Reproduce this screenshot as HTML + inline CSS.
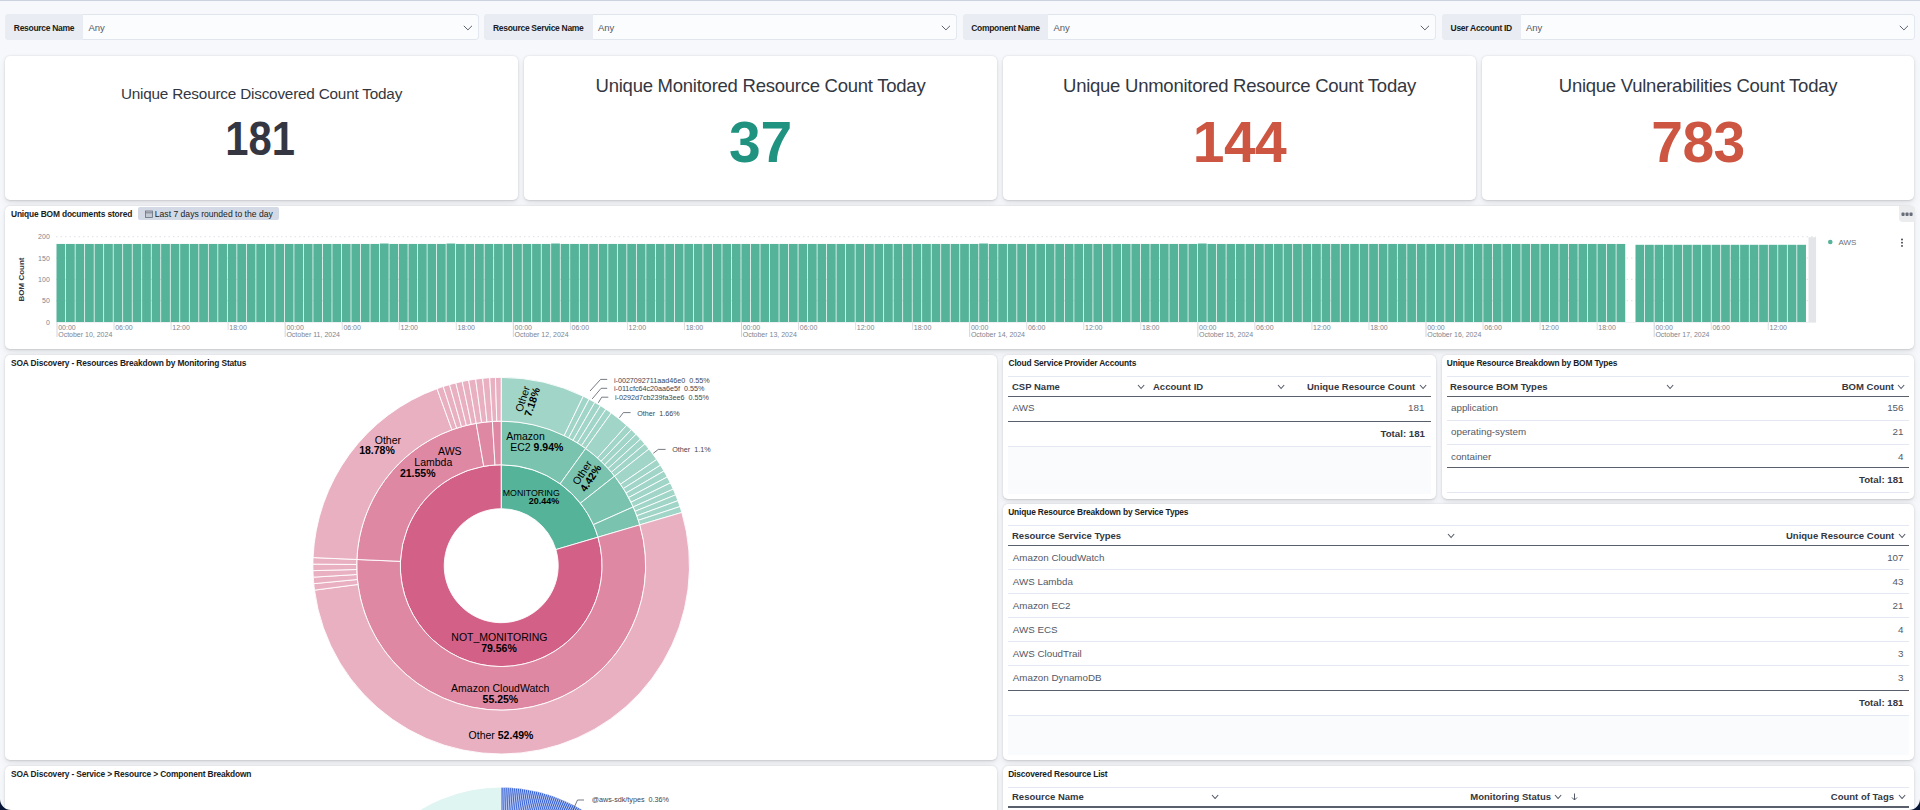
<!DOCTYPE html><html><head><meta charset="utf-8"><style>
*{box-sizing:border-box;margin:0;padding:0}
html,body{width:1920px;height:810px;overflow:hidden;background:#F7F8FC;font-family:"Liberation Sans", sans-serif;}
.topline{position:absolute;left:0;top:0;width:1920px;height:1.2px;background:#CDD3DE}
.filt{position:absolute;top:14px;height:26px;background:#FBFCFD;border-radius:4px;box-shadow:inset 0 0 0 0.9px #E1E6EE}
.flab{position:absolute;left:0;top:0;height:26px;background:#E9EDF3;border-radius:4px 0 0 4px;font-size:8.5px;letter-spacing:-0.3px;font-weight:700;color:#1a1c21;line-height:28.2px;text-align:center;white-space:nowrap}
.fany{position:absolute;top:0;height:26px;line-height:27px;font-size:9.5px;color:#535966}
.chev{position:absolute;top:10.6px}
.panel{position:absolute;background:#fff;border-radius:5px;box-shadow:0 0.7px 1.4px rgba(0,0,0,.08),0 1.9px 4px rgba(0,0,0,.06),0 4.5px 10px rgba(0,0,0,.05),0 0 2.5px rgba(0,0,0,.05)}
.mtitle{position:absolute;left:0;width:100%;text-align:center;color:#343741;white-space:nowrap;line-height:1}
.mnum{position:absolute;left:0;width:100%;text-align:center;font-weight:700;white-space:nowrap;line-height:1}
.ptitle{position:absolute;letter-spacing:-0.15px;font-size:8.4px;font-weight:700;color:#1a1c21;white-space:nowrap;line-height:10px}
.badge{position:absolute;left:132.5px;top:1px;width:141.7px;height:13.3px;background:#D3DAE6;border-radius:2px;font-size:8.6px;color:#1a1c21;line-height:15.8px;padding-left:17.3px;white-space:nowrap}
.dots{position:absolute;left:1893.5px;top:0;width:16px;height:15.5px;background:#EBECEE;border-radius:0 4px 0 4px} .dots svg{position:absolute;left:1px;top:5.5px}
.t{position:absolute;white-space:nowrap;line-height:1}
</style></head><body>
<div class="topline"></div>
<div class="filt" style="left:5px;width:473.5px">
<div class="flab" style="width:78px">Resource Name</div>
<div class="fany" style="left:83.5px">Any</div>
<svg class="chev" width="10" height="6" viewBox="0 0 10 6" style="left:457.5px"><path d="M0.8 0.8 L4.9 4.9 L9 0.8" fill="none" stroke="#535966" stroke-width="0.95"/></svg>
</div>
<div class="filt" style="left:484px;width:473px">
<div class="flab" style="width:108.5px">Resource Service Name</div>
<div class="fany" style="left:114.0px">Any</div>
<svg class="chev" width="10" height="6" viewBox="0 0 10 6" style="left:457px"><path d="M0.8 0.8 L4.9 4.9 L9 0.8" fill="none" stroke="#535966" stroke-width="0.95"/></svg>
</div>
<div class="filt" style="left:963px;width:473px">
<div class="flab" style="width:85px">Component Name</div>
<div class="fany" style="left:90.5px">Any</div>
<svg class="chev" width="10" height="6" viewBox="0 0 10 6" style="left:457px"><path d="M0.8 0.8 L4.9 4.9 L9 0.8" fill="none" stroke="#535966" stroke-width="0.95"/></svg>
</div>
<div class="filt" style="left:1442px;width:472.5px">
<div class="flab" style="width:78.5px">User Account ID</div>
<div class="fany" style="left:84.0px">Any</div>
<svg class="chev" width="10" height="6" viewBox="0 0 10 6" style="left:456.5px"><path d="M0.8 0.8 L4.9 4.9 L9 0.8" fill="none" stroke="#535966" stroke-width="0.95"/></svg>
</div>
<div class="panel" style="left:5px;top:56px;width:513px;height:144px">
<div class="mtitle" style="top:30px;font-size:15.3px;letter-spacing:-0.2px">Unique Resource Discovered Count Today</div>
<div class="mnum" style="top:58.5px;font-size:48px;letter-spacing:0px;color:#343741"><span style="display:inline-block;transform:scaleX(0.87);margin-left:-3px">181</span></div>
</div>
<div class="panel" style="left:524px;top:56px;width:473px;height:144px">
<div class="mtitle" style="top:21px;font-size:18.5px;letter-spacing:-0.25px">Unique Monitored Resource Count Today</div>
<div class="mnum" style="top:57.5px;font-size:57px;letter-spacing:-0.3px;color:#209280"><span style="display:inline-block;transform:scaleX(1);">37</span></div>
</div>
<div class="panel" style="left:1003px;top:56px;width:473px;height:144px">
<div class="mtitle" style="top:21px;font-size:18.5px;letter-spacing:-0.25px">Unique Unmonitored Resource Count Today</div>
<div class="mnum" style="top:57.5px;font-size:57px;letter-spacing:-0.5px;color:#CC5642"><span style="display:inline-block;transform:scaleX(1);">144</span></div>
</div>
<div class="panel" style="left:1482px;top:56px;width:432px;height:144px">
<div class="mtitle" style="top:21px;font-size:18.5px;letter-spacing:-0.25px">Unique Vulnerabilities Count Today</div>
<div class="mnum" style="top:57.5px;font-size:57px;letter-spacing:-0.5px;color:#CC5642"><span style="display:inline-block;transform:scaleX(1);">783</span></div>
</div>
<div class="panel" style="left:5px;top:206px;width:1909px;height:143px">
<div class="ptitle" style="left:6px;top:3px">Unique BOM documents stored</div>
<div class="badge"><svg width="8" height="8" viewBox="0 0 8 8" style="position:absolute;left:7px;top:3px"><rect x="0.5" y="1" width="7" height="6.5" fill="#C3C9D3" stroke="#69707D" stroke-width="0.8"/><line x1="0.5" y1="2.8" x2="7.5" y2="2.8" stroke="#69707D" stroke-width="0.8"/></svg>Last 7 days rounded to the day</div>
<div class="dots"><svg width="14" height="6" viewBox="0 0 14 6"><rect x="1.5" y="0.6" width="3.1" height="3.4" rx="0.9" fill="#686E79"/><rect x="5.5" y="0.6" width="3.1" height="3.4" rx="0.9" fill="#686E79"/><rect x="9.5" y="0.6" width="3.1" height="3.4" rx="0.9" fill="#686E79"/></svg></div>
<svg width="1909" height="142" style="position:absolute;left:0;top:0"><line x1="51" x2="1811" y1="30.7" y2="30.7" stroke="#DCDFE4" stroke-width="0.9" stroke-dasharray="1.5 3"/><line x1="51" x2="1811" y1="52.0" y2="52.0" stroke="#DCDFE4" stroke-width="0.9" stroke-dasharray="1.5 3"/><line x1="51" x2="1811" y1="73.4" y2="73.4" stroke="#DCDFE4" stroke-width="0.9" stroke-dasharray="1.5 3"/><line x1="51" x2="1811" y1="94.7" y2="94.7" stroke="#DCDFE4" stroke-width="0.9" stroke-dasharray="1.5 3"/><rect x="51.50" y="37.95" width="8.76" height="78.05" fill="#54B399"/><rect x="61.01" y="37.95" width="8.76" height="78.05" fill="#54B399"/><rect x="70.52" y="37.95" width="8.76" height="78.05" fill="#54B399"/><rect x="80.04" y="37.95" width="8.76" height="78.05" fill="#54B399"/><rect x="89.55" y="37.95" width="8.76" height="78.05" fill="#54B399"/><rect x="99.06" y="37.95" width="8.76" height="78.05" fill="#54B399"/><rect x="108.57" y="37.95" width="8.76" height="78.05" fill="#54B399"/><rect x="118.08" y="37.95" width="8.76" height="78.05" fill="#54B399"/><rect x="127.60" y="37.95" width="8.76" height="78.05" fill="#54B399"/><rect x="137.11" y="37.95" width="8.76" height="78.05" fill="#54B399"/><rect x="146.62" y="37.95" width="8.76" height="78.05" fill="#54B399"/><rect x="156.13" y="37.95" width="8.76" height="78.05" fill="#54B399"/><rect x="165.64" y="37.95" width="8.76" height="78.05" fill="#54B399"/><rect x="175.16" y="37.95" width="8.76" height="78.05" fill="#54B399"/><rect x="184.67" y="37.95" width="8.76" height="78.05" fill="#54B399"/><rect x="194.18" y="37.95" width="8.76" height="78.05" fill="#54B399"/><rect x="203.69" y="37.95" width="8.76" height="78.05" fill="#54B399"/><rect x="213.20" y="37.95" width="8.76" height="78.05" fill="#54B399"/><rect x="222.72" y="37.95" width="8.76" height="78.05" fill="#54B399"/><rect x="232.23" y="37.95" width="8.76" height="78.05" fill="#54B399"/><rect x="241.74" y="37.95" width="8.76" height="78.05" fill="#54B399"/><rect x="251.25" y="37.95" width="8.76" height="78.05" fill="#54B399"/><rect x="260.76" y="37.95" width="8.76" height="78.05" fill="#54B399"/><rect x="270.28" y="37.95" width="8.76" height="78.05" fill="#54B399"/><rect x="279.79" y="37.95" width="8.76" height="78.05" fill="#54B399"/><rect x="289.30" y="37.95" width="8.76" height="78.05" fill="#54B399"/><rect x="298.81" y="37.95" width="8.76" height="78.05" fill="#54B399"/><rect x="308.32" y="37.95" width="8.76" height="78.05" fill="#54B399"/><rect x="317.84" y="37.95" width="8.76" height="78.05" fill="#54B399"/><rect x="327.35" y="37.95" width="8.76" height="78.05" fill="#54B399"/><rect x="336.86" y="37.95" width="8.76" height="78.05" fill="#54B399"/><rect x="346.37" y="37.95" width="8.76" height="78.05" fill="#54B399"/><rect x="355.88" y="37.95" width="8.76" height="78.05" fill="#54B399"/><rect x="365.40" y="37.95" width="8.76" height="78.05" fill="#54B399"/><rect x="374.91" y="37.52" width="8.76" height="78.48" fill="#54B399"/><rect x="384.42" y="37.95" width="8.76" height="78.05" fill="#54B399"/><rect x="393.93" y="37.95" width="8.76" height="78.05" fill="#54B399"/><rect x="403.44" y="37.95" width="8.76" height="78.05" fill="#54B399"/><rect x="412.96" y="37.95" width="8.76" height="78.05" fill="#54B399"/><rect x="422.47" y="37.95" width="8.76" height="78.05" fill="#54B399"/><rect x="431.98" y="37.95" width="8.76" height="78.05" fill="#54B399"/><rect x="441.49" y="37.52" width="8.76" height="78.48" fill="#54B399"/><rect x="451.00" y="37.95" width="8.76" height="78.05" fill="#54B399"/><rect x="460.52" y="37.95" width="8.76" height="78.05" fill="#54B399"/><rect x="470.03" y="37.95" width="8.76" height="78.05" fill="#54B399"/><rect x="479.54" y="37.95" width="8.76" height="78.05" fill="#54B399"/><rect x="489.05" y="37.95" width="8.76" height="78.05" fill="#54B399"/><rect x="498.56" y="37.95" width="8.76" height="78.05" fill="#54B399"/><rect x="508.08" y="37.95" width="8.76" height="78.05" fill="#54B399"/><rect x="517.59" y="37.95" width="8.76" height="78.05" fill="#54B399"/><rect x="527.10" y="37.95" width="8.76" height="78.05" fill="#54B399"/><rect x="536.61" y="37.95" width="8.76" height="78.05" fill="#54B399"/><rect x="546.12" y="37.52" width="8.76" height="78.48" fill="#54B399"/><rect x="555.64" y="37.95" width="8.76" height="78.05" fill="#54B399"/><rect x="565.15" y="37.95" width="8.76" height="78.05" fill="#54B399"/><rect x="574.66" y="37.95" width="8.76" height="78.05" fill="#54B399"/><rect x="584.17" y="37.95" width="8.76" height="78.05" fill="#54B399"/><rect x="593.68" y="37.95" width="8.76" height="78.05" fill="#54B399"/><rect x="603.20" y="37.95" width="8.76" height="78.05" fill="#54B399"/><rect x="612.71" y="37.95" width="8.76" height="78.05" fill="#54B399"/><rect x="622.22" y="37.95" width="8.76" height="78.05" fill="#54B399"/><rect x="631.73" y="37.95" width="8.76" height="78.05" fill="#54B399"/><rect x="641.24" y="37.95" width="8.76" height="78.05" fill="#54B399"/><rect x="650.76" y="37.95" width="8.76" height="78.05" fill="#54B399"/><rect x="660.27" y="37.95" width="8.76" height="78.05" fill="#54B399"/><rect x="669.78" y="37.95" width="8.76" height="78.05" fill="#54B399"/><rect x="679.29" y="37.95" width="8.76" height="78.05" fill="#54B399"/><rect x="688.80" y="37.95" width="8.76" height="78.05" fill="#54B399"/><rect x="698.32" y="37.95" width="8.76" height="78.05" fill="#54B399"/><rect x="707.83" y="37.95" width="8.76" height="78.05" fill="#54B399"/><rect x="717.34" y="37.95" width="8.76" height="78.05" fill="#54B399"/><rect x="726.85" y="37.95" width="8.76" height="78.05" fill="#54B399"/><rect x="736.36" y="37.95" width="8.76" height="78.05" fill="#54B399"/><rect x="745.88" y="37.95" width="8.76" height="78.05" fill="#54B399"/><rect x="755.39" y="37.95" width="8.76" height="78.05" fill="#54B399"/><rect x="764.90" y="37.95" width="8.76" height="78.05" fill="#54B399"/><rect x="774.41" y="37.95" width="8.76" height="78.05" fill="#54B399"/><rect x="783.92" y="37.95" width="8.76" height="78.05" fill="#54B399"/><rect x="793.44" y="37.95" width="8.76" height="78.05" fill="#54B399"/><rect x="802.95" y="37.95" width="8.76" height="78.05" fill="#54B399"/><rect x="812.46" y="37.95" width="8.76" height="78.05" fill="#54B399"/><rect x="821.97" y="37.95" width="8.76" height="78.05" fill="#54B399"/><rect x="831.48" y="37.95" width="8.76" height="78.05" fill="#54B399"/><rect x="841.00" y="37.95" width="8.76" height="78.05" fill="#54B399"/><rect x="850.51" y="37.95" width="8.76" height="78.05" fill="#54B399"/><rect x="860.02" y="37.95" width="8.76" height="78.05" fill="#54B399"/><rect x="869.53" y="37.95" width="8.76" height="78.05" fill="#54B399"/><rect x="879.04" y="37.95" width="8.76" height="78.05" fill="#54B399"/><rect x="888.56" y="37.95" width="8.76" height="78.05" fill="#54B399"/><rect x="898.07" y="37.95" width="8.76" height="78.05" fill="#54B399"/><rect x="907.58" y="37.95" width="8.76" height="78.05" fill="#54B399"/><rect x="917.09" y="37.95" width="8.76" height="78.05" fill="#54B399"/><rect x="926.60" y="37.95" width="8.76" height="78.05" fill="#54B399"/><rect x="936.12" y="37.95" width="8.76" height="78.05" fill="#54B399"/><rect x="945.63" y="37.95" width="8.76" height="78.05" fill="#54B399"/><rect x="955.14" y="37.95" width="8.76" height="78.05" fill="#54B399"/><rect x="964.65" y="37.95" width="8.76" height="78.05" fill="#54B399"/><rect x="974.16" y="37.52" width="8.76" height="78.48" fill="#54B399"/><rect x="983.68" y="37.95" width="8.76" height="78.05" fill="#54B399"/><rect x="993.19" y="37.95" width="8.76" height="78.05" fill="#54B399"/><rect x="1002.70" y="37.95" width="8.76" height="78.05" fill="#54B399"/><rect x="1012.21" y="37.95" width="8.76" height="78.05" fill="#54B399"/><rect x="1021.72" y="37.95" width="8.76" height="78.05" fill="#54B399"/><rect x="1031.24" y="37.95" width="8.76" height="78.05" fill="#54B399"/><rect x="1040.75" y="37.95" width="8.76" height="78.05" fill="#54B399"/><rect x="1050.26" y="37.95" width="8.76" height="78.05" fill="#54B399"/><rect x="1059.77" y="37.95" width="8.76" height="78.05" fill="#54B399"/><rect x="1069.28" y="37.95" width="8.76" height="78.05" fill="#54B399"/><rect x="1078.80" y="37.95" width="8.76" height="78.05" fill="#54B399"/><rect x="1088.31" y="37.95" width="8.76" height="78.05" fill="#54B399"/><rect x="1097.82" y="37.95" width="8.76" height="78.05" fill="#54B399"/><rect x="1107.33" y="37.95" width="8.76" height="78.05" fill="#54B399"/><rect x="1116.84" y="37.95" width="8.76" height="78.05" fill="#54B399"/><rect x="1126.36" y="37.95" width="8.76" height="78.05" fill="#54B399"/><rect x="1135.87" y="37.95" width="8.76" height="78.05" fill="#54B399"/><rect x="1145.38" y="37.95" width="8.76" height="78.05" fill="#54B399"/><rect x="1154.89" y="37.95" width="8.76" height="78.05" fill="#54B399"/><rect x="1164.40" y="37.95" width="8.76" height="78.05" fill="#54B399"/><rect x="1173.92" y="37.95" width="8.76" height="78.05" fill="#54B399"/><rect x="1183.43" y="37.95" width="8.76" height="78.05" fill="#54B399"/><rect x="1192.94" y="37.52" width="8.76" height="78.48" fill="#54B399"/><rect x="1202.45" y="37.95" width="8.76" height="78.05" fill="#54B399"/><rect x="1211.96" y="37.95" width="8.76" height="78.05" fill="#54B399"/><rect x="1221.48" y="37.95" width="8.76" height="78.05" fill="#54B399"/><rect x="1230.99" y="37.95" width="8.76" height="78.05" fill="#54B399"/><rect x="1240.50" y="37.95" width="8.76" height="78.05" fill="#54B399"/><rect x="1250.01" y="37.95" width="8.76" height="78.05" fill="#54B399"/><rect x="1259.52" y="37.95" width="8.76" height="78.05" fill="#54B399"/><rect x="1269.04" y="37.95" width="8.76" height="78.05" fill="#54B399"/><rect x="1278.55" y="37.95" width="8.76" height="78.05" fill="#54B399"/><rect x="1288.06" y="37.95" width="8.76" height="78.05" fill="#54B399"/><rect x="1297.57" y="37.95" width="8.76" height="78.05" fill="#54B399"/><rect x="1307.08" y="37.95" width="8.76" height="78.05" fill="#54B399"/><rect x="1316.60" y="37.95" width="8.76" height="78.05" fill="#54B399"/><rect x="1326.11" y="37.95" width="8.76" height="78.05" fill="#54B399"/><rect x="1335.62" y="37.95" width="8.76" height="78.05" fill="#54B399"/><rect x="1345.13" y="37.95" width="8.76" height="78.05" fill="#54B399"/><rect x="1354.64" y="37.95" width="8.76" height="78.05" fill="#54B399"/><rect x="1364.16" y="37.95" width="8.76" height="78.05" fill="#54B399"/><rect x="1373.67" y="37.95" width="8.76" height="78.05" fill="#54B399"/><rect x="1383.18" y="37.95" width="8.76" height="78.05" fill="#54B399"/><rect x="1392.69" y="37.95" width="8.76" height="78.05" fill="#54B399"/><rect x="1402.20" y="37.95" width="8.76" height="78.05" fill="#54B399"/><rect x="1411.72" y="37.95" width="8.76" height="78.05" fill="#54B399"/><rect x="1421.23" y="37.95" width="8.76" height="78.05" fill="#54B399"/><rect x="1430.74" y="37.95" width="8.76" height="78.05" fill="#54B399"/><rect x="1440.25" y="37.95" width="8.76" height="78.05" fill="#54B399"/><rect x="1449.76" y="37.95" width="8.76" height="78.05" fill="#54B399"/><rect x="1459.28" y="37.95" width="8.76" height="78.05" fill="#54B399"/><rect x="1468.79" y="37.95" width="8.76" height="78.05" fill="#54B399"/><rect x="1478.30" y="37.95" width="8.76" height="78.05" fill="#54B399"/><rect x="1487.81" y="37.95" width="8.76" height="78.05" fill="#54B399"/><rect x="1497.32" y="37.95" width="8.76" height="78.05" fill="#54B399"/><rect x="1506.84" y="37.95" width="8.76" height="78.05" fill="#54B399"/><rect x="1516.35" y="37.95" width="8.76" height="78.05" fill="#54B399"/><rect x="1525.86" y="37.95" width="8.76" height="78.05" fill="#54B399"/><rect x="1535.37" y="37.95" width="8.76" height="78.05" fill="#54B399"/><rect x="1544.88" y="37.95" width="8.76" height="78.05" fill="#54B399"/><rect x="1554.40" y="37.95" width="8.76" height="78.05" fill="#54B399"/><rect x="1563.91" y="37.95" width="8.76" height="78.05" fill="#54B399"/><rect x="1573.42" y="37.95" width="8.76" height="78.05" fill="#54B399"/><rect x="1582.93" y="37.95" width="8.76" height="78.05" fill="#54B399"/><rect x="1592.44" y="37.95" width="8.76" height="78.05" fill="#54B399"/><rect x="1601.96" y="37.95" width="8.76" height="78.05" fill="#54B399"/><rect x="1611.47" y="37.95" width="8.76" height="78.05" fill="#54B399"/><rect x="1630.49" y="38.80" width="8.76" height="77.20" fill="#54B399"/><rect x="1640.00" y="38.80" width="8.76" height="77.20" fill="#54B399"/><rect x="1649.52" y="38.80" width="8.76" height="77.20" fill="#54B399"/><rect x="1659.03" y="38.80" width="8.76" height="77.20" fill="#54B399"/><rect x="1668.54" y="38.80" width="8.76" height="77.20" fill="#54B399"/><rect x="1678.05" y="38.80" width="8.76" height="77.20" fill="#54B399"/><rect x="1687.56" y="38.80" width="8.76" height="77.20" fill="#54B399"/><rect x="1697.08" y="38.80" width="8.76" height="77.20" fill="#54B399"/><rect x="1706.59" y="38.80" width="8.76" height="77.20" fill="#54B399"/><rect x="1716.10" y="38.80" width="8.76" height="77.20" fill="#54B399"/><rect x="1725.61" y="38.80" width="8.76" height="77.20" fill="#54B399"/><rect x="1735.12" y="38.80" width="8.76" height="77.20" fill="#54B399"/><rect x="1744.64" y="38.80" width="8.76" height="77.20" fill="#54B399"/><rect x="1754.15" y="38.80" width="8.76" height="77.20" fill="#54B399"/><rect x="1763.66" y="38.80" width="8.76" height="77.20" fill="#54B399"/><rect x="1773.17" y="38.80" width="8.76" height="77.20" fill="#54B399"/><rect x="1782.68" y="38.80" width="8.76" height="77.20" fill="#54B399"/><rect x="1792.20" y="38.80" width="8.76" height="77.20" fill="#54B399"/><rect x="1803.5" y="31.19999999999999" width="7.6" height="84.8" fill="#E4E5E8"/><line x1="51" x2="1811" y1="116.5" y2="116.5" stroke="#EEF0F3" stroke-width="1"/><text x="44.8" y="33.3" text-anchor="end" font-size="7" fill="#7E8591" font-family='"Liberation Sans"'>200</text><text x="44.8" y="54.6" text-anchor="end" font-size="7" fill="#7E8591" font-family='"Liberation Sans"'>150</text><text x="44.8" y="76.0" text-anchor="end" font-size="7" fill="#7E8591" font-family='"Liberation Sans"'>100</text><text x="44.8" y="97.3" text-anchor="end" font-size="7" fill="#7E8591" font-family='"Liberation Sans"'>50</text><text x="44.8" y="118.6" text-anchor="end" font-size="7" fill="#7E8591" font-family='"Liberation Sans"'>0</text><text transform="translate(18.5,73.5) rotate(-90)" text-anchor="middle" font-size="8" font-weight="700" fill="#343741" font-family='"Liberation Sans"'>BOM Count</text><line x1="52.0" x2="52.0" y1="116.5" y2="131" stroke="#C5C9D0" stroke-width="0.8"/><text x="53.2" y="124.3" font-size="7" fill="#7E8591" font-family='"Liberation Sans"'>00:00</text><text x="53.2" y="130.6" font-size="7" fill="#7E8591" font-family='"Liberation Sans"'>October 10, 2024</text><line x1="109.04249999999999" x2="109.04249999999999" y1="116.5" y2="124" stroke="#D3D6DB" stroke-width="0.8"/><text x="110.2" y="124.3" font-size="7" fill="#7E8591" font-family='"Liberation Sans"'>06:00</text><line x1="166.08499999999998" x2="166.08499999999998" y1="116.5" y2="124" stroke="#D3D6DB" stroke-width="0.8"/><text x="167.3" y="124.3" font-size="7" fill="#7E8591" font-family='"Liberation Sans"'>12:00</text><line x1="223.1275" x2="223.1275" y1="116.5" y2="124" stroke="#D3D6DB" stroke-width="0.8"/><text x="224.3" y="124.3" font-size="7" fill="#7E8591" font-family='"Liberation Sans"'>18:00</text><line x1="280.16999999999996" x2="280.16999999999996" y1="116.5" y2="131" stroke="#C5C9D0" stroke-width="0.8"/><text x="281.4" y="124.3" font-size="7" fill="#7E8591" font-family='"Liberation Sans"'>00:00</text><text x="281.4" y="130.6" font-size="7" fill="#7E8591" font-family='"Liberation Sans"'>October 11, 2024</text><line x1="337.2125" x2="337.2125" y1="116.5" y2="124" stroke="#D3D6DB" stroke-width="0.8"/><text x="338.4" y="124.3" font-size="7" fill="#7E8591" font-family='"Liberation Sans"'>06:00</text><line x1="394.25499999999994" x2="394.25499999999994" y1="116.5" y2="124" stroke="#D3D6DB" stroke-width="0.8"/><text x="395.5" y="124.3" font-size="7" fill="#7E8591" font-family='"Liberation Sans"'>12:00</text><line x1="451.29749999999996" x2="451.29749999999996" y1="116.5" y2="124" stroke="#D3D6DB" stroke-width="0.8"/><text x="452.5" y="124.3" font-size="7" fill="#7E8591" font-family='"Liberation Sans"'>18:00</text><line x1="508.3399999999999" x2="508.3399999999999" y1="116.5" y2="131" stroke="#C5C9D0" stroke-width="0.8"/><text x="509.5" y="124.3" font-size="7" fill="#7E8591" font-family='"Liberation Sans"'>00:00</text><text x="509.5" y="130.6" font-size="7" fill="#7E8591" font-family='"Liberation Sans"'>October 12, 2024</text><line x1="565.3824999999999" x2="565.3824999999999" y1="116.5" y2="124" stroke="#D3D6DB" stroke-width="0.8"/><text x="566.6" y="124.3" font-size="7" fill="#7E8591" font-family='"Liberation Sans"'>06:00</text><line x1="622.425" x2="622.425" y1="116.5" y2="124" stroke="#D3D6DB" stroke-width="0.8"/><text x="623.6" y="124.3" font-size="7" fill="#7E8591" font-family='"Liberation Sans"'>12:00</text><line x1="679.4675" x2="679.4675" y1="116.5" y2="124" stroke="#D3D6DB" stroke-width="0.8"/><text x="680.7" y="124.3" font-size="7" fill="#7E8591" font-family='"Liberation Sans"'>18:00</text><line x1="736.51" x2="736.51" y1="116.5" y2="131" stroke="#C5C9D0" stroke-width="0.8"/><text x="737.7" y="124.3" font-size="7" fill="#7E8591" font-family='"Liberation Sans"'>00:00</text><text x="737.7" y="130.6" font-size="7" fill="#7E8591" font-family='"Liberation Sans"'>October 13, 2024</text><line x1="793.5525" x2="793.5525" y1="116.5" y2="124" stroke="#D3D6DB" stroke-width="0.8"/><text x="794.8" y="124.3" font-size="7" fill="#7E8591" font-family='"Liberation Sans"'>06:00</text><line x1="850.595" x2="850.595" y1="116.5" y2="124" stroke="#D3D6DB" stroke-width="0.8"/><text x="851.8" y="124.3" font-size="7" fill="#7E8591" font-family='"Liberation Sans"'>12:00</text><line x1="907.6375" x2="907.6375" y1="116.5" y2="124" stroke="#D3D6DB" stroke-width="0.8"/><text x="908.8" y="124.3" font-size="7" fill="#7E8591" font-family='"Liberation Sans"'>18:00</text><line x1="964.68" x2="964.68" y1="116.5" y2="131" stroke="#C5C9D0" stroke-width="0.8"/><text x="965.9" y="124.3" font-size="7" fill="#7E8591" font-family='"Liberation Sans"'>00:00</text><text x="965.9" y="130.6" font-size="7" fill="#7E8591" font-family='"Liberation Sans"'>October 14, 2024</text><line x1="1021.7224999999999" x2="1021.7224999999999" y1="116.5" y2="124" stroke="#D3D6DB" stroke-width="0.8"/><text x="1022.9" y="124.3" font-size="7" fill="#7E8591" font-family='"Liberation Sans"'>06:00</text><line x1="1078.7649999999999" x2="1078.7649999999999" y1="116.5" y2="124" stroke="#D3D6DB" stroke-width="0.8"/><text x="1080.0" y="124.3" font-size="7" fill="#7E8591" font-family='"Liberation Sans"'>12:00</text><line x1="1135.8075" x2="1135.8075" y1="116.5" y2="124" stroke="#D3D6DB" stroke-width="0.8"/><text x="1137.0" y="124.3" font-size="7" fill="#7E8591" font-family='"Liberation Sans"'>18:00</text><line x1="1192.85" x2="1192.85" y1="116.5" y2="131" stroke="#C5C9D0" stroke-width="0.8"/><text x="1194.0" y="124.3" font-size="7" fill="#7E8591" font-family='"Liberation Sans"'>00:00</text><text x="1194.0" y="130.6" font-size="7" fill="#7E8591" font-family='"Liberation Sans"'>October 15, 2024</text><line x1="1249.8925" x2="1249.8925" y1="116.5" y2="124" stroke="#D3D6DB" stroke-width="0.8"/><text x="1251.1" y="124.3" font-size="7" fill="#7E8591" font-family='"Liberation Sans"'>06:00</text><line x1="1306.935" x2="1306.935" y1="116.5" y2="124" stroke="#D3D6DB" stroke-width="0.8"/><text x="1308.1" y="124.3" font-size="7" fill="#7E8591" font-family='"Liberation Sans"'>12:00</text><line x1="1363.9775" x2="1363.9775" y1="116.5" y2="124" stroke="#D3D6DB" stroke-width="0.8"/><text x="1365.2" y="124.3" font-size="7" fill="#7E8591" font-family='"Liberation Sans"'>18:00</text><line x1="1421.02" x2="1421.02" y1="116.5" y2="131" stroke="#C5C9D0" stroke-width="0.8"/><text x="1422.2" y="124.3" font-size="7" fill="#7E8591" font-family='"Liberation Sans"'>00:00</text><text x="1422.2" y="130.6" font-size="7" fill="#7E8591" font-family='"Liberation Sans"'>October 16, 2024</text><line x1="1478.0625" x2="1478.0625" y1="116.5" y2="124" stroke="#D3D6DB" stroke-width="0.8"/><text x="1479.3" y="124.3" font-size="7" fill="#7E8591" font-family='"Liberation Sans"'>06:00</text><line x1="1535.105" x2="1535.105" y1="116.5" y2="124" stroke="#D3D6DB" stroke-width="0.8"/><text x="1536.3" y="124.3" font-size="7" fill="#7E8591" font-family='"Liberation Sans"'>12:00</text><line x1="1592.1475" x2="1592.1475" y1="116.5" y2="124" stroke="#D3D6DB" stroke-width="0.8"/><text x="1593.3" y="124.3" font-size="7" fill="#7E8591" font-family='"Liberation Sans"'>18:00</text><line x1="1649.1899999999998" x2="1649.1899999999998" y1="116.5" y2="131" stroke="#C5C9D0" stroke-width="0.8"/><text x="1650.4" y="124.3" font-size="7" fill="#7E8591" font-family='"Liberation Sans"'>00:00</text><text x="1650.4" y="130.6" font-size="7" fill="#7E8591" font-family='"Liberation Sans"'>October 17, 2024</text><line x1="1706.2324999999998" x2="1706.2324999999998" y1="116.5" y2="124" stroke="#D3D6DB" stroke-width="0.8"/><text x="1707.4" y="124.3" font-size="7" fill="#7E8591" font-family='"Liberation Sans"'>06:00</text><line x1="1763.2749999999999" x2="1763.2749999999999" y1="116.5" y2="124" stroke="#D3D6DB" stroke-width="0.8"/><text x="1764.5" y="124.3" font-size="7" fill="#7E8591" font-family='"Liberation Sans"'>12:00</text><circle cx="1825.3" cy="36" r="2.3" fill="#54B399"/><text x="1833.5" y="38.80000000000001" font-size="8" fill="#69707D" font-family='"Liberation Sans"'>AWS</text><circle cx="1897" cy="33.5" r="0.9" fill="#343741"/><circle cx="1897" cy="36.7" r="0.9" fill="#343741"/><circle cx="1897" cy="39.9" r="0.9" fill="#343741"/></svg>
</div>
<div class="panel" style="left:5px;top:355px;width:992px;height:405px"></div>
<div class="panel" style="left:1003px;top:355px;width:432.5px;height:144px"></div>
<div class="panel" style="left:1441.5px;top:355px;width:472.5px;height:144px"></div>
<div class="panel" style="left:1003px;top:504.3px;width:911px;height:255.7px"></div>
<div class="panel" style="left:5px;top:766px;width:992px;height:100px"></div>
<div class="panel" style="left:1003px;top:766px;width:911px;height:100px"></div>
<div class="t" style="left:11px;top:359.30px;font-size:8.4px;font-weight:700;color:#1a1c21;letter-spacing:-0.15px">SOA Discovery - Resources Breakdown by Monitoring Status</div>
<div class="t" style="left:1008.5px;top:359.30px;font-size:8.4px;font-weight:700;color:#1a1c21;letter-spacing:-0.15px">Cloud Service Provider Accounts</div>
<div class="t" style="left:1446.8px;top:359.30px;font-size:8.4px;font-weight:700;color:#1a1c21;letter-spacing:-0.15px">Unique Resource Breakdown by BOM Types</div>
<div class="t" style="left:1008.2px;top:507.80px;font-size:8.4px;font-weight:700;color:#1a1c21;letter-spacing:-0.15px">Unique Resource Breakdown by Service Types</div>
<div class="t" style="left:11px;top:769.80px;font-size:8.4px;font-weight:700;color:#1a1c21;letter-spacing:-0.15px">SOA Discovery - Service &gt; Resource &gt; Component Breakdown</div>
<div class="t" style="left:1008.2px;top:769.80px;font-size:8.4px;font-weight:700;color:#1a1c21;letter-spacing:-0.15px">Discovered Resource List</div>
<div style="position:absolute;left:1008px;top:375.90px;width:423px;height:1px;background:#E3E8F2"></div>
<div class="t" style="left:1012px;top:381.90px;font-size:9.5px;font-weight:700;color:#343741;letter-spacing:0px">CSP Name</div>
<svg style="position:absolute;left:1136.7px;top:384.2px" width="8.2" height="5.5" viewBox="0 0 8.2 5.5"><path d="M1 1 L4.1 4.5 L7.2 1" fill="none" stroke="#535966" stroke-width="1.1"/></svg>
<div class="t" style="left:1153px;top:381.90px;font-size:9.5px;font-weight:700;color:#343741;letter-spacing:0px">Account ID</div>
<svg style="position:absolute;left:1277.2px;top:384.2px" width="8.2" height="5.5" viewBox="0 0 8.2 5.5"><path d="M1 1 L4.1 4.5 L7.2 1" fill="none" stroke="#535966" stroke-width="1.1"/></svg>
<div class="t" style="right:504.79999999999995px;top:381.90px;font-size:9.5px;font-weight:700;color:#343741;letter-spacing:0px">Unique Resource Count</div>
<svg style="position:absolute;left:1418.5px;top:384.2px" width="8.2" height="5.5" viewBox="0 0 8.2 5.5"><path d="M1 1 L4.1 4.5 L7.2 1" fill="none" stroke="#535966" stroke-width="1.1"/></svg>
<div style="position:absolute;left:1008px;top:395.90px;width:423px;height:1.2px;background:#5A606B"></div>
<div class="t" style="left:1012.5px;top:403.43px;font-size:9.8px;font-weight:400;color:#535966;letter-spacing:0px">AWS</div>
<div class="t" style="right:495.5999999999999px;top:403.43px;font-size:9.8px;font-weight:400;color:#535966;letter-spacing:0px">181</div>
<div style="position:absolute;left:1008px;top:420.90px;width:423px;height:1.2px;background:#5A606B"></div>
<div class="t" style="right:495px;top:428.72px;font-size:9.7px;font-weight:700;color:#343741;letter-spacing:0px">Total: 181</div>
<div style="position:absolute;left:1008px;top:445.70px;width:423px;height:1px;background:#E3E8F2"></div>
<div style="position:absolute;left:1008px;top:446.8px;width:423px;height:47.19999999999999px;background:#FAFBFD"></div>
<div style="position:absolute;left:1446.5px;top:375.80px;width:462.5px;height:1px;background:#E3E8F2"></div>
<div class="t" style="left:1450px;top:381.90px;font-size:9.5px;font-weight:700;color:#343741;letter-spacing:0px">Resource BOM Types</div>
<svg style="position:absolute;left:1665.5px;top:384.2px" width="8.2" height="5.5" viewBox="0 0 8.2 5.5"><path d="M1 1 L4.1 4.5 L7.2 1" fill="none" stroke="#535966" stroke-width="1.1"/></svg>
<div class="t" style="right:26px;top:381.90px;font-size:9.5px;font-weight:700;color:#343741;letter-spacing:0px">BOM Count</div>
<svg style="position:absolute;left:1897px;top:384.2px" width="8.2" height="5.5" viewBox="0 0 8.2 5.5"><path d="M1 1 L4.1 4.5 L7.2 1" fill="none" stroke="#535966" stroke-width="1.1"/></svg>
<div style="position:absolute;left:1446.5px;top:395.90px;width:462.5px;height:1.2px;background:#5A606B"></div>
<div class="t" style="left:1451px;top:403.43px;font-size:9.8px;font-weight:400;color:#535966;letter-spacing:0px">application</div>
<div class="t" style="right:16.5px;top:403.43px;font-size:9.8px;font-weight:400;color:#535966;letter-spacing:0px">156</div>
<div class="t" style="left:1451px;top:427.48px;font-size:9.8px;font-weight:400;color:#535966;letter-spacing:0px">operating-system</div>
<div class="t" style="right:16.5px;top:427.48px;font-size:9.8px;font-weight:400;color:#535966;letter-spacing:0px">21</div>
<div class="t" style="left:1451px;top:451.53px;font-size:9.8px;font-weight:400;color:#535966;letter-spacing:0px">container</div>
<div class="t" style="right:16.5px;top:451.53px;font-size:9.8px;font-weight:400;color:#535966;letter-spacing:0px">4</div>
<div style="position:absolute;left:1446.5px;top:419.90px;width:462.5px;height:1px;background:#E3E8F2"></div>
<div style="position:absolute;left:1446.5px;top:443.90px;width:462.5px;height:1px;background:#E3E8F2"></div>
<div style="position:absolute;left:1446.5px;top:466.90px;width:462.5px;height:1.2px;background:#5A606B"></div>
<div class="t" style="right:16.5px;top:474.82px;font-size:9.7px;font-weight:700;color:#343741;letter-spacing:0px">Total: 181</div>
<div style="position:absolute;left:1446.5px;top:491.90px;width:462.5px;height:1px;background:#E3E8F2"></div>
<div style="position:absolute;left:1008px;top:525.10px;width:901px;height:1px;background:#E3E8F2"></div>
<div class="t" style="left:1012px;top:531.00px;font-size:9.5px;font-weight:700;color:#343741;letter-spacing:0px">Resource Service Types</div>
<svg style="position:absolute;left:1446.6px;top:533.3px" width="8.2" height="5.5" viewBox="0 0 8.2 5.5"><path d="M1 1 L4.1 4.5 L7.2 1" fill="none" stroke="#535966" stroke-width="1.1"/></svg>
<div class="t" style="right:25.799999999999955px;top:531.00px;font-size:9.5px;font-weight:700;color:#343741;letter-spacing:0px">Unique Resource Count</div>
<svg style="position:absolute;left:1897.5px;top:533.3px" width="8.2" height="5.5" viewBox="0 0 8.2 5.5"><path d="M1 1 L4.1 4.5 L7.2 1" fill="none" stroke="#535966" stroke-width="1.1"/></svg>
<div style="position:absolute;left:1008px;top:544.85px;width:901px;height:1.3px;background:#5A606B"></div>
<div class="t" style="left:1012.8px;top:553.23px;font-size:9.8px;font-weight:400;color:#535966;letter-spacing:0px">Amazon CloudWatch</div>
<div class="t" style="right:16.5px;top:553.23px;font-size:9.8px;font-weight:400;color:#535966;letter-spacing:0px">107</div>
<div style="position:absolute;left:1008px;top:568.80px;width:901px;height:1px;background:#E3E8F2"></div>
<div class="t" style="left:1012.8px;top:576.53px;font-size:9.8px;font-weight:400;color:#535966;letter-spacing:0px">AWS Lambda</div>
<div class="t" style="right:16.5px;top:576.53px;font-size:9.8px;font-weight:400;color:#535966;letter-spacing:0px">43</div>
<div style="position:absolute;left:1008px;top:592.88px;width:901px;height:1px;background:#E3E8F2"></div>
<div class="t" style="left:1012.8px;top:600.63px;font-size:9.8px;font-weight:400;color:#535966;letter-spacing:0px">Amazon EC2</div>
<div class="t" style="right:16.5px;top:600.63px;font-size:9.8px;font-weight:400;color:#535966;letter-spacing:0px">21</div>
<div style="position:absolute;left:1008px;top:616.96px;width:901px;height:1px;background:#E3E8F2"></div>
<div class="t" style="left:1012.8px;top:624.73px;font-size:9.8px;font-weight:400;color:#535966;letter-spacing:0px">AWS ECS</div>
<div class="t" style="right:16.5px;top:624.73px;font-size:9.8px;font-weight:400;color:#535966;letter-spacing:0px">4</div>
<div style="position:absolute;left:1008px;top:641.04px;width:901px;height:1px;background:#E3E8F2"></div>
<div class="t" style="left:1012.8px;top:648.83px;font-size:9.8px;font-weight:400;color:#535966;letter-spacing:0px">AWS CloudTrail</div>
<div class="t" style="right:16.5px;top:648.83px;font-size:9.8px;font-weight:400;color:#535966;letter-spacing:0px">3</div>
<div style="position:absolute;left:1008px;top:665.12px;width:901px;height:1px;background:#E3E8F2"></div>
<div class="t" style="left:1012.8px;top:672.93px;font-size:9.8px;font-weight:400;color:#535966;letter-spacing:0px">Amazon DynamoDB</div>
<div class="t" style="right:16.5px;top:672.93px;font-size:9.8px;font-weight:400;color:#535966;letter-spacing:0px">3</div>
<div style="position:absolute;left:1008px;top:689.75px;width:901px;height:1.3px;background:#5A606B"></div>
<div class="t" style="right:16.5px;top:697.72px;font-size:9.7px;font-weight:700;color:#343741;letter-spacing:0px">Total: 181</div>
<div style="position:absolute;left:1008px;top:714.60px;width:901px;height:1px;background:#E3E8F2"></div>
<div style="position:absolute;left:1008px;top:715.7px;width:901px;height:39.299999999999955px;background:#FAFBFD"></div>
<div style="position:absolute;left:1008px;top:786.80px;width:901px;height:1px;background:#E3E8F2"></div>
<div class="t" style="left:1012px;top:792.00px;font-size:9.5px;font-weight:700;color:#343741;letter-spacing:0px">Resource Name</div>
<svg style="position:absolute;left:1210.5px;top:793.8px" width="8.2" height="5.5" viewBox="0 0 8.2 5.5"><path d="M1 1 L4.1 4.5 L7.2 1" fill="none" stroke="#535966" stroke-width="1.1"/></svg>
<div class="t" style="right:369px;top:792.00px;font-size:9.5px;font-weight:700;color:#343741;letter-spacing:0px">Monitoring Status</div>
<svg style="position:absolute;left:1554px;top:793.8px" width="8.2" height="5.5" viewBox="0 0 8.2 5.5"><path d="M1 1 L4.1 4.5 L7.2 1" fill="none" stroke="#535966" stroke-width="1.1"/></svg>
<svg style="position:absolute;left:1571px;top:793px" width="7" height="8" viewBox="0 0 7 8"><path d="M3.5 0.5 V7 M1 4.5 L3.5 7 L6 4.5" fill="none" stroke="#535966" stroke-width="1"/></svg>
<div class="t" style="right:26px;top:792.00px;font-size:9.5px;font-weight:700;color:#343741;letter-spacing:0px">Count of Tags</div>
<svg style="position:absolute;left:1897.5px;top:793.8px" width="8.2" height="5.5" viewBox="0 0 8.2 5.5"><path d="M1 1 L4.1 4.5 L7.2 1" fill="none" stroke="#535966" stroke-width="1.1"/></svg>
<div style="position:absolute;left:1008px;top:806.35px;width:901px;height:1.3px;background:#5A606B"></div>
<svg style="position:absolute;left:0;top:0;z-index:5" width="1920" height="810"><path d="M501.20,464.80 A100.9,100.9 0 0 1 597.99,537.18 L555.88,549.59 A57,57 0 0 0 501.20,508.70 Z" fill="#54B399" stroke="#fff" stroke-width="0.9"/><path d="M597.99,537.18 A100.9,100.9 0 1 1 501.20,464.80 L501.20,508.70 A57,57 0 1 0 555.88,549.59 Z" fill="#D36086" stroke="#fff" stroke-width="0.9"/><path d="M501.20,421.20 A144.5,144.5 0 0 1 585.69,448.47 L560.19,483.84 A100.9,100.9 0 0 0 501.20,464.80 Z" fill="#7AC4AF" stroke="#fff" stroke-width="0.9"/><path d="M585.69,448.47 A144.5,144.5 0 0 1 614.60,476.14 L580.38,503.16 A100.9,100.9 0 0 0 560.19,483.84 Z" fill="#7AC4AF" stroke="#fff" stroke-width="0.9"/><path d="M614.60,476.14 A144.5,144.5 0 0 1 633.21,506.93 L593.38,524.66 A100.9,100.9 0 0 0 580.38,503.16 Z" fill="#7AC4AF" stroke="#fff" stroke-width="0.9"/><path d="M633.21,506.93 A144.5,144.5 0 0 1 639.81,524.86 L597.99,537.18 A100.9,100.9 0 0 0 593.38,524.66 Z" fill="#7AC4AF" stroke="#fff" stroke-width="0.9"/><path d="M639.81,524.86 A144.5,144.5 0 1 1 356.83,559.47 L400.39,561.35 A100.9,100.9 0 1 0 597.99,537.18 Z" fill="#DE88A4" stroke="#fff" stroke-width="0.9"/><path d="M356.83,559.47 A144.5,144.5 0 0 1 476.23,423.37 L483.77,466.32 A100.9,100.9 0 0 0 400.39,561.35 Z" fill="#DE88A4" stroke="#fff" stroke-width="0.9"/><path d="M476.23,423.37 A144.5,144.5 0 0 1 492.38,421.47 L495.04,464.99 A100.9,100.9 0 0 0 483.77,466.32 Z" fill="#DE88A4" stroke="#fff" stroke-width="0.9"/><path d="M492.38,421.47 A144.5,144.5 0 0 1 501.20,421.20 L501.20,464.80 A100.9,100.9 0 0 0 495.04,464.99 Z" fill="#DE88A4" stroke="#fff" stroke-width="0.9"/><path d="M501.20,377.40 A188.3,188.3 0 0 1 583.30,396.24 L564.20,435.66 A144.5,144.5 0 0 0 501.20,421.20 Z" fill="#A1D5C7" stroke="#fff" stroke-width="0.9"/><path d="M583.30,396.24 A188.3,188.3 0 0 1 589.13,399.19 L568.67,437.92 A144.5,144.5 0 0 0 564.20,435.66 Z" fill="#A1D5C7" stroke="#fff" stroke-width="0.9"/><path d="M589.13,399.19 A188.3,188.3 0 0 1 594.84,402.34 L573.06,440.34 A144.5,144.5 0 0 0 568.67,437.92 Z" fill="#A1D5C7" stroke="#fff" stroke-width="0.9"/><path d="M594.84,402.34 A188.3,188.3 0 0 1 600.45,405.68 L577.36,442.90 A144.5,144.5 0 0 0 573.06,440.34 Z" fill="#A1D5C7" stroke="#fff" stroke-width="0.9"/><path d="M600.45,405.68 A188.3,188.3 0 0 1 605.93,409.21 L581.57,445.61 A144.5,144.5 0 0 0 577.36,442.90 Z" fill="#A1D5C7" stroke="#fff" stroke-width="0.9"/><path d="M605.93,409.21 A188.3,188.3 0 0 1 611.29,412.94 L585.69,448.47 A144.5,144.5 0 0 0 581.57,445.61 Z" fill="#A1D5C7" stroke="#fff" stroke-width="0.9"/><path d="M611.29,412.94 A188.3,188.3 0 0 1 626.61,425.24 L597.44,457.91 A144.5,144.5 0 0 0 585.69,448.47 Z" fill="#A1D5C7" stroke="#fff" stroke-width="0.9"/><path d="M626.61,425.24 A188.3,188.3 0 0 1 631.41,429.67 L601.12,461.31 A144.5,144.5 0 0 0 597.44,457.91 Z" fill="#A1D5C7" stroke="#fff" stroke-width="0.9"/><path d="M631.41,429.67 A188.3,188.3 0 0 1 636.05,434.27 L604.68,464.84 A144.5,144.5 0 0 0 601.12,461.31 Z" fill="#A1D5C7" stroke="#fff" stroke-width="0.9"/><path d="M636.05,434.27 A188.3,188.3 0 0 1 640.53,439.03 L608.12,468.49 A144.5,144.5 0 0 0 604.68,464.84 Z" fill="#A1D5C7" stroke="#fff" stroke-width="0.9"/><path d="M640.53,439.03 A188.3,188.3 0 0 1 644.84,443.94 L611.43,472.26 A144.5,144.5 0 0 0 608.12,468.49 Z" fill="#A1D5C7" stroke="#fff" stroke-width="0.9"/><path d="M644.84,443.94 A188.3,188.3 0 0 1 648.97,449.00 L614.60,476.14 A144.5,144.5 0 0 0 611.43,472.26 Z" fill="#A1D5C7" stroke="#fff" stroke-width="0.9"/><path d="M648.97,449.00 A188.3,188.3 0 0 1 656.68,459.48 L620.51,484.19 A144.5,144.5 0 0 0 614.60,476.14 Z" fill="#A1D5C7" stroke="#fff" stroke-width="0.9"/><path d="M656.68,459.48 A188.3,188.3 0 0 1 660.41,465.16 L623.38,488.55 A144.5,144.5 0 0 0 620.51,484.19 Z" fill="#A1D5C7" stroke="#fff" stroke-width="0.9"/><path d="M660.41,465.16 A188.3,188.3 0 0 1 663.94,470.97 L626.08,493.00 A144.5,144.5 0 0 0 623.38,488.55 Z" fill="#A1D5C7" stroke="#fff" stroke-width="0.9"/><path d="M663.94,470.97 A188.3,188.3 0 0 1 667.25,476.90 L628.62,497.56 A144.5,144.5 0 0 0 626.08,493.00 Z" fill="#A1D5C7" stroke="#fff" stroke-width="0.9"/><path d="M667.25,476.90 A188.3,188.3 0 0 1 670.34,482.95 L631.00,502.20 A144.5,144.5 0 0 0 628.62,497.56 Z" fill="#A1D5C7" stroke="#fff" stroke-width="0.9"/><path d="M670.34,482.95 A188.3,188.3 0 0 1 673.22,489.11 L633.21,506.93 A144.5,144.5 0 0 0 631.00,502.20 Z" fill="#A1D5C7" stroke="#fff" stroke-width="0.9"/><path d="M673.22,489.11 A188.3,188.3 0 0 1 675.66,494.84 L635.08,511.33 A144.5,144.5 0 0 0 633.21,506.93 Z" fill="#A1D5C7" stroke="#fff" stroke-width="0.9"/><path d="M675.66,494.84 A188.3,188.3 0 0 1 677.91,500.66 L636.81,515.79 A144.5,144.5 0 0 0 635.08,511.33 Z" fill="#A1D5C7" stroke="#fff" stroke-width="0.9"/><path d="M677.91,500.66 A188.3,188.3 0 0 1 679.96,506.54 L638.38,520.30 A144.5,144.5 0 0 0 636.81,515.79 Z" fill="#A1D5C7" stroke="#fff" stroke-width="0.9"/><path d="M679.96,506.54 A188.3,188.3 0 0 1 681.82,512.48 L639.81,524.86 A144.5,144.5 0 0 0 638.38,520.30 Z" fill="#A1D5C7" stroke="#fff" stroke-width="0.9"/><path d="M681.82,512.48 A188.3,188.3 0 1 1 314.49,590.15 L357.92,584.46 A144.5,144.5 0 1 0 639.81,524.86 Z" fill="#E9B0C2" stroke="#fff" stroke-width="0.9"/><path d="M314.49,590.15 A188.3,188.3 0 0 1 313.76,583.66 L357.36,579.48 A144.5,144.5 0 0 0 357.92,584.46 Z" fill="#E9B0C2" stroke="#fff" stroke-width="0.9"/><path d="M313.76,583.66 A188.3,188.3 0 0 1 313.25,577.16 L356.97,574.49 A144.5,144.5 0 0 0 357.36,579.48 Z" fill="#E9B0C2" stroke="#fff" stroke-width="0.9"/><path d="M313.25,577.16 A188.3,188.3 0 0 1 312.96,570.64 L356.75,569.49 A144.5,144.5 0 0 0 356.97,574.49 Z" fill="#E9B0C2" stroke="#fff" stroke-width="0.9"/><path d="M312.96,570.64 A188.3,188.3 0 0 1 312.91,564.11 L356.71,564.48 A144.5,144.5 0 0 0 356.75,569.49 Z" fill="#E9B0C2" stroke="#fff" stroke-width="0.9"/><path d="M312.91,564.11 A188.3,188.3 0 0 1 313.07,557.58 L356.83,559.47 A144.5,144.5 0 0 0 356.71,564.48 Z" fill="#E9B0C2" stroke="#fff" stroke-width="0.9"/><path d="M313.07,557.58 A188.3,188.3 0 0 1 437.01,388.68 L451.94,429.85 A144.5,144.5 0 0 0 356.83,559.47 Z" fill="#E9B0C2" stroke="#fff" stroke-width="0.9"/><path d="M437.01,388.68 A188.3,188.3 0 0 1 443.22,386.55 L456.71,428.22 A144.5,144.5 0 0 0 451.94,429.85 Z" fill="#E9B0C2" stroke="#fff" stroke-width="0.9"/><path d="M443.22,386.55 A188.3,188.3 0 0 1 449.49,384.64 L461.52,426.75 A144.5,144.5 0 0 0 456.71,428.22 Z" fill="#E9B0C2" stroke="#fff" stroke-width="0.9"/><path d="M449.49,384.64 A188.3,188.3 0 0 1 455.83,382.95 L466.38,425.46 A144.5,144.5 0 0 0 461.52,426.75 Z" fill="#E9B0C2" stroke="#fff" stroke-width="0.9"/><path d="M455.83,382.95 A188.3,188.3 0 0 1 462.22,381.48 L471.29,424.33 A144.5,144.5 0 0 0 466.38,425.46 Z" fill="#E9B0C2" stroke="#fff" stroke-width="0.9"/><path d="M462.22,381.48 A188.3,188.3 0 0 1 468.66,380.23 L476.23,423.37 A144.5,144.5 0 0 0 471.29,424.33 Z" fill="#E9B0C2" stroke="#fff" stroke-width="0.9"/><path d="M468.66,380.23 A188.3,188.3 0 0 1 475.64,379.14 L481.59,422.54 A144.5,144.5 0 0 0 476.23,423.37 Z" fill="#E9B0C2" stroke="#fff" stroke-width="0.9"/><path d="M475.64,379.14 A188.3,188.3 0 0 1 482.66,378.31 L486.97,421.90 A144.5,144.5 0 0 0 481.59,422.54 Z" fill="#E9B0C2" stroke="#fff" stroke-width="0.9"/><path d="M482.66,378.31 A188.3,188.3 0 0 1 489.70,377.75 L492.38,421.47 A144.5,144.5 0 0 0 486.97,421.90 Z" fill="#E9B0C2" stroke="#fff" stroke-width="0.9"/><path d="M489.70,377.75 A188.3,188.3 0 0 1 495.45,377.49 L496.79,421.27 A144.5,144.5 0 0 0 492.38,421.47 Z" fill="#E9B0C2" stroke="#fff" stroke-width="0.9"/><path d="M495.45,377.49 A188.3,188.3 0 0 1 501.20,377.40 L501.20,421.20 A144.5,144.5 0 0 0 496.79,421.27 Z" fill="#E9B0C2" stroke="#fff" stroke-width="0.9"/><text x="531.3" y="495.8" font-size="8.8" font-weight="400" text-anchor="middle" fill="#000" font-family='"Liberation Sans"' >MONITORING</text><text x="544" y="504.4" font-size="9" font-weight="700" text-anchor="middle" fill="#000" font-family='"Liberation Sans"' >20.44%</text><text x="525.5" y="440.2" font-size="10.5" font-weight="400" text-anchor="middle" fill="#000" font-family='"Liberation Sans"' >Amazon</text><text x="536.8" y="451.4" font-size="10.5" font-weight="400" text-anchor="middle" fill="#000" font-family='"Liberation Sans"' >EC2 <tspan font-weight="700">9.94%</tspan></text><text x="449.8" y="454.7" font-size="10.5" font-weight="400" text-anchor="middle" fill="#000" font-family='"Liberation Sans"' >AWS</text><text x="433.3" y="466.4" font-size="10.5" font-weight="400" text-anchor="middle" fill="#000" font-family='"Liberation Sans"' >Lambda</text><text x="417.7" y="476.5" font-size="10.5" font-weight="700" text-anchor="middle" fill="#000" font-family='"Liberation Sans"' >21.55%</text><text x="387.9" y="443.9" font-size="10.5" font-weight="400" text-anchor="middle" fill="#000" font-family='"Liberation Sans"' >Other</text><text x="377" y="453.9" font-size="10.5" font-weight="700" text-anchor="middle" fill="#000" font-family='"Liberation Sans"' >18.78%</text><text x="499.4" y="641.4" font-size="10.5" font-weight="400" text-anchor="middle" fill="#000" font-family='"Liberation Sans"' >NOT_MONITORING</text><text x="499" y="652.3" font-size="10.5" font-weight="700" text-anchor="middle" fill="#000" font-family='"Liberation Sans"' >79.56%</text><text x="500.2" y="692.3" font-size="10.5" font-weight="400" text-anchor="middle" fill="#000" font-family='"Liberation Sans"' >Amazon CloudWatch</text><text x="500.4" y="703.1" font-size="10.5" font-weight="700" text-anchor="middle" fill="#000" font-family='"Liberation Sans"' >55.25%</text><text x="501" y="738.8" font-size="10.5" font-weight="400" text-anchor="middle" fill="#000" font-family='"Liberation Sans"' >Other <tspan font-weight="700">52.49%</tspan></text><g transform="translate(527.5,400.5) rotate(-72)"><text x="0" y="-1.5" font-size="10.5" font-weight="400" text-anchor="middle" fill="#000" font-family='"Liberation Sans"' >Other</text><text x="0" y="8.5" font-size="10.5" font-weight="700" text-anchor="middle" fill="#000" font-family='"Liberation Sans"' >7.18%</text></g><g transform="translate(586.5,475.5) rotate(-57)"><text x="0" y="-1.5" font-size="10.5" font-weight="400" text-anchor="middle" fill="#000" font-family='"Liberation Sans"' >Other</text><text x="0" y="8.5" font-size="10.5" font-weight="700" text-anchor="middle" fill="#000" font-family='"Liberation Sans"' >4.42%</text></g><polyline points="590,391 600.6,379.4 607.2,379.4" fill="none" stroke="#535966" stroke-width="0.8"/><text x="613.9" y="382.8" font-size="7.2" font-weight="400" text-anchor="start" fill="#404550" font-family='"Liberation Sans"' >i-0027092711aad46e0&#160; 0.55%</text><polyline points="592.2,398.9 601.1,388.3 607.2,388.3" fill="none" stroke="#535966" stroke-width="0.8"/><text x="613.9" y="391.2" font-size="7.2" font-weight="400" text-anchor="start" fill="#404550" font-family='"Liberation Sans"' >i-011cfc64c20aa6e5f&#160; 0.55%</text><polyline points="598.3,402.8 601.7,397.2 608.3,397.2" fill="none" stroke="#535966" stroke-width="0.8"/><text x="615" y="399.6" font-size="7.2" font-weight="400" text-anchor="start" fill="#404550" font-family='"Liberation Sans"' >i-0292d7cb239fa3ee6&#160; 0.55%</text><polyline points="619.4,417.8 623.3,412.6 630.6,412.6" fill="none" stroke="#535966" stroke-width="0.8"/><text x="637.2" y="415.7" font-size="7.2" font-weight="400" text-anchor="start" fill="#404550" font-family='"Liberation Sans"' >Other&#160; 1.66%</text><polyline points="653.3,453.3 658.3,449.4 665.6,449.4" fill="none" stroke="#535966" stroke-width="0.8"/><text x="672.2" y="451.9" font-size="7.2" font-weight="400" text-anchor="start" fill="#404550" font-family='"Liberation Sans"' >Other&#160; 1.1%</text><path d="M344.20,944.50 A157,157 0 0 1 501.20,787.50 L501.20,944.50 A0,0 0 0 0 501.20,944.50 Z" fill="#DFF5F1" stroke="#fff" stroke-width="0"/><path d="M501.20,1101.50 A157,157 0 0 1 344.20,944.50 L501.20,944.50 A0,0 0 0 0 501.20,944.50 Z" fill="#DFF5F1" stroke="#fff" stroke-width="0"/><path d="M501.20,787.50 A157,157 0 0 1 503.26,787.51 L501.99,884.51 A60,60 0 0 0 501.20,884.50 Z" fill="#3560D4" stroke="#fff" stroke-width="0.45"/><path d="M503.26,787.51 A157,157 0 0 1 505.31,787.55 L502.77,884.52 A60,60 0 0 0 501.99,884.51 Z" fill="#3560D4" stroke="#fff" stroke-width="0.45"/><path d="M505.31,787.55 A157,157 0 0 1 507.36,787.62 L503.56,884.55 A60,60 0 0 0 502.77,884.52 Z" fill="#3560D4" stroke="#fff" stroke-width="0.45"/><path d="M507.36,787.62 A157,157 0 0 1 509.42,787.72 L504.34,884.58 A60,60 0 0 0 503.56,884.55 Z" fill="#3560D4" stroke="#fff" stroke-width="0.45"/><path d="M509.42,787.72 A157,157 0 0 1 511.47,787.84 L505.12,884.63 A60,60 0 0 0 504.34,884.58 Z" fill="#3560D4" stroke="#fff" stroke-width="0.45"/><path d="M511.47,787.84 A157,157 0 0 1 513.52,787.98 L505.91,884.68 A60,60 0 0 0 505.12,884.63 Z" fill="#3560D4" stroke="#fff" stroke-width="0.45"/><path d="M513.52,787.98 A157,157 0 0 1 515.57,788.16 L506.69,884.75 A60,60 0 0 0 505.91,884.68 Z" fill="#3560D4" stroke="#fff" stroke-width="0.45"/><path d="M515.57,788.16 A157,157 0 0 1 517.61,788.36 L507.47,884.83 A60,60 0 0 0 506.69,884.75 Z" fill="#3560D4" stroke="#fff" stroke-width="0.45"/><path d="M517.61,788.36 A157,157 0 0 1 519.65,788.59 L508.25,884.92 A60,60 0 0 0 507.47,884.83 Z" fill="#3560D4" stroke="#fff" stroke-width="0.45"/><path d="M519.65,788.59 A157,157 0 0 1 521.69,788.84 L509.03,885.01 A60,60 0 0 0 508.25,884.92 Z" fill="#3560D4" stroke="#fff" stroke-width="0.45"/><path d="M521.69,788.84 A157,157 0 0 1 523.73,789.12 L509.81,885.12 A60,60 0 0 0 509.03,885.01 Z" fill="#3560D4" stroke="#fff" stroke-width="0.45"/><path d="M523.73,789.12 A157,157 0 0 1 525.76,789.43 L510.59,885.24 A60,60 0 0 0 509.81,885.12 Z" fill="#3560D4" stroke="#fff" stroke-width="0.45"/><path d="M525.76,789.43 A157,157 0 0 1 527.79,789.77 L511.36,885.37 A60,60 0 0 0 510.59,885.24 Z" fill="#3560D4" stroke="#fff" stroke-width="0.45"/><path d="M527.79,789.77 A157,157 0 0 1 529.81,790.13 L512.13,885.50 A60,60 0 0 0 511.36,885.37 Z" fill="#3560D4" stroke="#fff" stroke-width="0.45"/><path d="M529.81,790.13 A157,157 0 0 1 531.83,790.52 L512.91,885.65 A60,60 0 0 0 512.13,885.50 Z" fill="#3560D4" stroke="#fff" stroke-width="0.45"/><path d="M531.83,790.52 A157,157 0 0 1 533.84,790.93 L513.67,885.81 A60,60 0 0 0 512.91,885.65 Z" fill="#3560D4" stroke="#fff" stroke-width="0.45"/><path d="M533.84,790.93 A157,157 0 0 1 535.85,791.37 L514.44,885.98 A60,60 0 0 0 513.67,885.81 Z" fill="#3560D4" stroke="#fff" stroke-width="0.45"/><path d="M535.85,791.37 A157,157 0 0 1 537.85,791.84 L515.21,886.16 A60,60 0 0 0 514.44,885.98 Z" fill="#3560D4" stroke="#fff" stroke-width="0.45"/><path d="M537.85,791.84 A157,157 0 0 1 539.85,792.33 L515.97,886.35 A60,60 0 0 0 515.21,886.16 Z" fill="#3560D4" stroke="#fff" stroke-width="0.45"/><path d="M539.85,792.33 A157,157 0 0 1 541.83,792.85 L516.73,886.54 A60,60 0 0 0 515.97,886.35 Z" fill="#3560D4" stroke="#fff" stroke-width="0.45"/><path d="M541.83,792.85 A157,157 0 0 1 543.82,793.39 L517.49,886.75 A60,60 0 0 0 516.73,886.54 Z" fill="#3560D4" stroke="#fff" stroke-width="0.45"/><path d="M543.82,793.39 A157,157 0 0 1 545.79,793.97 L518.24,886.97 A60,60 0 0 0 517.49,886.75 Z" fill="#3560D4" stroke="#fff" stroke-width="0.45"/><path d="M545.79,793.97 A157,157 0 0 1 547.76,794.56 L518.99,887.20 A60,60 0 0 0 518.24,886.97 Z" fill="#3560D4" stroke="#fff" stroke-width="0.45"/><path d="M547.76,794.56 A157,157 0 0 1 549.72,795.18 L519.74,887.44 A60,60 0 0 0 518.99,887.20 Z" fill="#3560D4" stroke="#fff" stroke-width="0.45"/><path d="M549.72,795.18 A157,157 0 0 1 551.67,795.83 L520.49,887.68 A60,60 0 0 0 519.74,887.44 Z" fill="#3560D4" stroke="#fff" stroke-width="0.45"/><path d="M551.67,795.83 A157,157 0 0 1 553.61,796.51 L521.23,887.94 A60,60 0 0 0 520.49,887.68 Z" fill="#3560D4" stroke="#fff" stroke-width="0.45"/><path d="M553.61,796.51 A157,157 0 0 1 555.54,797.20 L521.97,888.21 A60,60 0 0 0 521.23,887.94 Z" fill="#3560D4" stroke="#fff" stroke-width="0.45"/><path d="M555.54,797.20 A157,157 0 0 1 557.46,797.93 L522.70,888.49 A60,60 0 0 0 521.97,888.21 Z" fill="#3560D4" stroke="#fff" stroke-width="0.45"/><path d="M557.46,797.93 A157,157 0 0 1 559.38,798.68 L523.43,888.77 A60,60 0 0 0 522.70,888.49 Z" fill="#3560D4" stroke="#fff" stroke-width="0.45"/><path d="M559.38,798.68 A157,157 0 0 1 561.28,799.45 L524.16,889.07 A60,60 0 0 0 523.43,888.77 Z" fill="#3560D4" stroke="#fff" stroke-width="0.45"/><path d="M561.28,799.45 A157,157 0 0 1 563.17,800.25 L524.88,889.37 A60,60 0 0 0 524.16,889.07 Z" fill="#3560D4" stroke="#fff" stroke-width="0.45"/><path d="M563.17,800.25 A157,157 0 0 1 565.06,801.07 L525.60,889.69 A60,60 0 0 0 524.88,889.37 Z" fill="#3560D4" stroke="#fff" stroke-width="0.45"/><path d="M565.06,801.07 A157,157 0 0 1 566.93,801.92 L526.32,890.01 A60,60 0 0 0 525.60,889.69 Z" fill="#3560D4" stroke="#fff" stroke-width="0.45"/><path d="M566.93,801.92 A157,157 0 0 1 568.79,802.79 L527.03,890.34 A60,60 0 0 0 526.32,890.01 Z" fill="#3560D4" stroke="#fff" stroke-width="0.45"/><path d="M568.79,802.79 A157,157 0 0 1 570.64,803.69 L527.74,890.69 A60,60 0 0 0 527.03,890.34 Z" fill="#3560D4" stroke="#fff" stroke-width="0.45"/><path d="M570.64,803.69 A157,157 0 0 1 572.48,804.61 L528.44,891.04 A60,60 0 0 0 527.74,890.69 Z" fill="#3560D4" stroke="#fff" stroke-width="0.45"/><path d="M572.48,804.61 A157,157 0 0 1 574.30,805.56 L529.14,891.40 A60,60 0 0 0 528.44,891.04 Z" fill="#3560D4" stroke="#fff" stroke-width="0.45"/><path d="M574.30,805.56 A157,157 0 0 1 576.11,806.53 L529.83,891.77 A60,60 0 0 0 529.14,891.40 Z" fill="#3560D4" stroke="#fff" stroke-width="0.45"/><path d="M576.11,806.53 A157,157 0 0 1 577.91,807.52 L530.52,892.15 A60,60 0 0 0 529.83,891.77 Z" fill="#3560D4" stroke="#fff" stroke-width="0.45"/><path d="M577.91,807.52 A157,157 0 0 1 579.70,808.53 L531.20,892.54 A60,60 0 0 0 530.52,892.15 Z" fill="#3560D4" stroke="#fff" stroke-width="0.45"/><path d="M579.70,808.53 A157,157 0 0 1 581.47,809.57 L531.88,892.94 A60,60 0 0 0 531.20,892.54 Z" fill="#3560D4" stroke="#fff" stroke-width="0.45"/><path d="M581.47,809.57 A157,157 0 0 1 583.23,810.64 L532.55,893.34 A60,60 0 0 0 531.88,892.94 Z" fill="#3560D4" stroke="#fff" stroke-width="0.45"/><path d="M583.23,810.64 A157,157 0 0 1 584.98,811.72 L533.22,893.76 A60,60 0 0 0 532.55,893.34 Z" fill="#3560D4" stroke="#fff" stroke-width="0.45"/><path d="M584.98,811.72 A157,157 0 0 1 586.71,812.83 L533.88,894.18 A60,60 0 0 0 533.22,893.76 Z" fill="#3560D4" stroke="#fff" stroke-width="0.45"/><path d="M586.71,812.83 A157,157 0 0 1 588.42,813.96 L534.53,894.61 A60,60 0 0 0 533.88,894.18 Z" fill="#3560D4" stroke="#fff" stroke-width="0.45"/><path d="M588.42,813.96 A157,157 0 0 1 590.13,815.11 L535.18,895.05 A60,60 0 0 0 534.53,894.61 Z" fill="#3560D4" stroke="#fff" stroke-width="0.45"/><path d="M590.13,815.11 A157,157 0 0 1 591.81,816.29 L535.83,895.50 A60,60 0 0 0 535.18,895.05 Z" fill="#3560D4" stroke="#fff" stroke-width="0.45"/><path d="M591.81,816.29 A157,157 0 0 1 593.48,817.48 L536.47,895.96 A60,60 0 0 0 535.83,895.50 Z" fill="#3560D4" stroke="#fff" stroke-width="0.45"/><path d="M593.48,817.48 A157,157 0 0 1 595.14,818.70 L537.10,896.42 A60,60 0 0 0 536.47,895.96 Z" fill="#3560D4" stroke="#fff" stroke-width="0.45"/><path d="M595.14,818.70 A157,157 0 0 1 596.78,819.94 L537.73,896.90 A60,60 0 0 0 537.10,896.42 Z" fill="#3560D4" stroke="#fff" stroke-width="0.45"/><path d="M596.78,819.94 A157,157 0 0 1 598.40,821.21 L538.35,897.38 A60,60 0 0 0 537.73,896.90 Z" fill="#3560D4" stroke="#fff" stroke-width="0.45"/><path d="M598.40,821.21 A157,157 0 0 1 600.00,822.49 L538.96,897.87 A60,60 0 0 0 538.35,897.38 Z" fill="#3560D4" stroke="#fff" stroke-width="0.45"/><path d="M600.00,822.49 A157,157 0 0 1 601.59,823.79 L539.57,898.37 A60,60 0 0 0 538.96,897.87 Z" fill="#3560D4" stroke="#fff" stroke-width="0.45"/><path d="M601.59,823.79 A157,157 0 0 1 603.16,825.12 L540.17,898.88 A60,60 0 0 0 539.57,898.37 Z" fill="#3560D4" stroke="#fff" stroke-width="0.45"/><path d="M603.16,825.12 A157,157 0 0 1 604.72,826.46 L540.76,899.39 A60,60 0 0 0 540.17,898.88 Z" fill="#3560D4" stroke="#fff" stroke-width="0.45"/><path d="M604.72,826.46 A157,157 0 0 1 606.25,827.83 L541.35,899.91 A60,60 0 0 0 540.76,899.39 Z" fill="#3560D4" stroke="#fff" stroke-width="0.45"/><polyline points="573,810 577.5,800 584,800" fill="none" stroke="#535966" stroke-width="0.8"/><text x="591.7" y="802.4" font-size="7.2" fill="#404550" font-family='"Liberation Sans"'>@aws-sdk/types&#160; 0.36%</text></svg>
<svg style="position:absolute;left:0;top:0;z-index:10" width="1920" height="810"><path d="M0,799 A11,11 0 0 0 11,810 L0,810 Z" fill="#081638"/><path d="M1920,799 A11,11 0 0 1 1909,810 L1920,810 Z" fill="#081638"/></svg>
</body></html>
